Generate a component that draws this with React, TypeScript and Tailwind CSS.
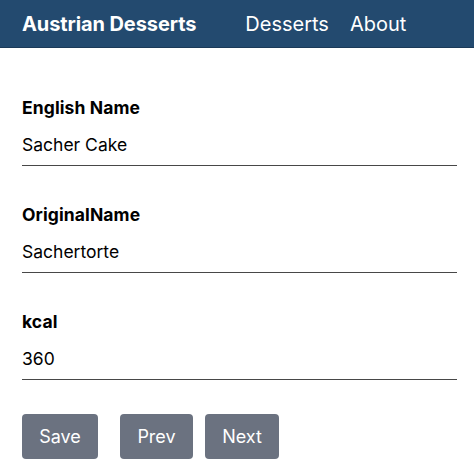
import React from "react";

const fields = [
  { label: "English Name", value: "Sacher Cake" },
  { label: "OriginalName", value: "Sachertorte" },
  { label: "kcal", value: "360" },
];

export default function App() {
  return (
    <div className="min-h-[475px] bg-white text-black" style={{ fontFamily: "Inter, 'Liberation Sans', sans-serif" }}>
      <header className="h-[48px] bg-[#234a6f] border-b border-[#1b3a58] flex items-center px-[22px] text-white">
        <span className="text-[20px] font-bold tracking-[-0.1px]">Austrian Desserts</span>
        <nav className="flex gap-[21px] ml-[49px] text-[20px]">
          <span>Desserts</span>
          <span>About</span>
        </nav>
      </header>
      <main className="px-[22px] pt-[50px] pr-[17px]">
        {fields.map((f) => (
          <div key={f.label} className="mb-[39px]">
            <div className="text-[17.5px] font-bold leading-[20px] tracking-[0.1px]">{f.label}</div>
            <div className="mt-[15px] text-[17.5px] leading-[24px] pb-[8px] border-b-[1.5px] border-[#484848]">{f.value}</div>
          </div>
        ))}
        <div className="flex mt-[-5px]">
          <button className="w-[76px] h-[45px] rounded-[4px] bg-[#6b7280] text-white text-[18px]">Save</button>
          <button className="ml-[22px] w-[73px] h-[45px] rounded-[4px] bg-[#6b7280] text-white text-[18px]">Prev</button>
          <button className="ml-[12px] w-[74px] h-[45px] rounded-[4px] bg-[#6b7280] text-white text-[18px]">Next</button>
        </div>
      </main>
    </div>
  );
}
